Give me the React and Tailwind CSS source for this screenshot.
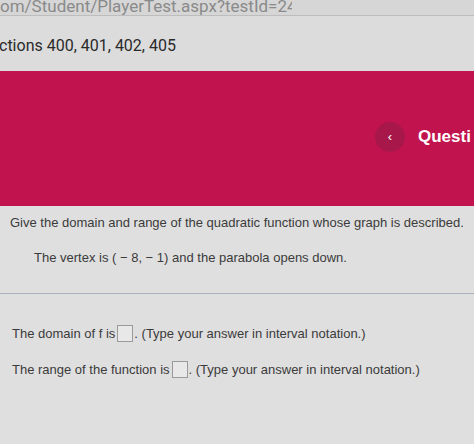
export default function App() {
  return (
    <div className="w-[474px] h-[444px] overflow-hidden bg-[#dedede] flex flex-col" style={{ fontFamily: '"Liberation Sans", Arial, sans-serif' }}>
      <div className="h-[16px] bg-[#d6d6d6] border-b border-[#bdbdbd] overflow-hidden">
        <div className="w-[292px] overflow-hidden -mt-[4px] text-[17px] leading-[20px] text-[#8a8a8a] whitespace-nowrap" style={{ fontFamily: 'Roboto, sans-serif' }}>
          om/Student/PlayerTest.aspx?testId=243003265
        </div>
      </div>
      <div className="h-[55px] bg-[#dcdcdc] flex items-center pt-[5px]">
        <span className="text-[16px] text-[#2a2a2a] whitespace-nowrap -ml-[1px]" style={{ fontFamily: 'Roboto, sans-serif' }}>
          ctions 400, 401, 402, 405
        </span>
      </div>
      <div className="h-[135px] bg-[#c1134d] flex items-center justify-end pb-[4px]">
        <div className="w-[30px] h-[30px] rounded-full bg-[#a8174a] flex items-center justify-center text-white text-[13px] mr-[13px]">
          ‹
        </div>
        <span className="text-white font-bold text-[17px] whitespace-nowrap -mr-[10px] w-[66px]">Questi</span>
      </div>
      <div className="flex-1 bg-[#dfdfdf] text-[#3b3b3b] text-[13px]">
        <p className="pl-[10px] pt-[7px] whitespace-nowrap">Give the domain and range of the quadratic function whose graph is described.</p>
        <p className="pl-[34px] pt-[15px] whitespace-nowrap">The vertex is ( − 8, − 1) and the parabola opens down.</p>
        <div className="mt-[26px] h-px bg-[#a9b1bd]"></div>
        <div className="pl-[12px] pt-[30px] flex items-center whitespace-nowrap">
          <span>The domain of f is</span>
          <span className="w-[16px] h-[17px] border border-[#9a9a9a] bg-[#e8e8e8] ml-[2px] mr-[1px] inline-block"></span>
          <span>. (Type your answer in interval notation.)</span>
        </div>
        <div className="pl-[12px] pt-[16px] flex items-center whitespace-nowrap">
          <span>The range of the function is</span>
          <span className="w-[16px] h-[17px] border border-[#9a9a9a] bg-[#e8e8e8] ml-[2px] mr-[1px] inline-block"></span>
          <span>. (Type your answer in interval notation.)</span>
        </div>
      </div>
    </div>
  )
}
